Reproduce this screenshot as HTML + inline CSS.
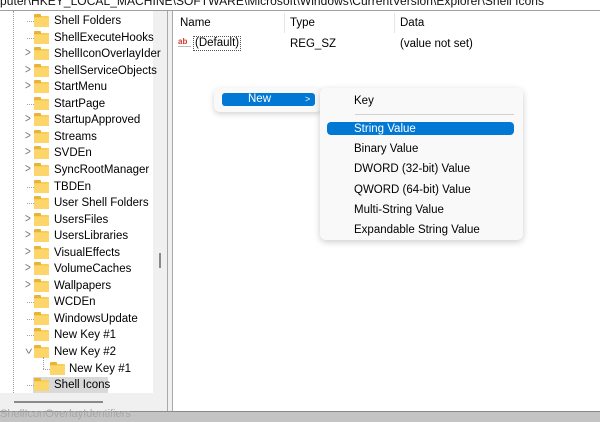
<!DOCTYPE html>
<html><head><meta charset="utf-8"><style>
*{margin:0;padding:0;box-sizing:border-box}
body{width:600px;height:422px;overflow:hidden;background:#fff;font-family:"Liberation Sans",sans-serif;font-size:11.5px;color:#000;position:relative}
.abs{position:absolute}
.row{position:absolute;height:16px;line-height:16px;white-space:nowrap}
.fold{position:absolute;width:15px;height:11px;background:#f8cf55;border-radius:1px}
.fold:before{content:"";position:absolute;left:0;top:-2px;width:7px;height:3px;background:#e9b33a;border-radius:1px 1px 0 0}
.fold:after{content:"";position:absolute;left:0;top:2px;width:15px;height:9px;background:#fcd66a}
.chev{position:absolute;font-size:10px;color:#777;line-height:16px}
.mi{position:absolute;left:354px;font-size:11.5px;line-height:14px}
</style></head><body>
<div class="abs" style="left:0;top:-6px;font-size:12px;color:#111;white-space:nowrap;letter-spacing:0.05px">puter\HKEY_LOCAL_MACHINE\SOFTWARE\Microsoft\Windows\CurrentVersion\Explorer\Shell Icons</div>
<div class="abs" style="left:0;top:10px;width:600px;height:1px;background:#a0a0a0"></div>
<div class="abs" style="left:153px;top:11px;width:14px;height:400px;background:#f0f0f0"></div>
<div class="abs" style="left:159px;top:253px;width:2px;height:15px;background:#8a8a8a"></div>
<div class="abs" style="left:0;top:393px;width:153px;height:18px;background:#f0f0f0"></div>
<div class="abs" style="left:14px;top:401px;width:89px;height:2px;background:#8a8a8a"></div>
<div class="abs" style="left:167px;top:11px;width:6px;height:400px;background:#f0f0f0;border-left:1px solid #a8a8a8;border-right:1px solid #a8a8a8"></div>
<div class="abs" style="left:13px;top:11px;width:0;height:382px;border-left:1px dotted #a0a0a0"></div>

<div class="abs" style="left:33px;top:377px;width:75px;height:16px;background:#d9d9d9"></div>
<div id="tree"></div>
<script>
var items=[["Shell Folders",0],["ShellExecuteHooks",0],["ShellIconOverlayIder",1],["ShellServiceObjects",1],["StartMenu",1],["StartPage",0],["StartupApproved",1],["Streams",1],["SVDEn",1],["SyncRootManager",1],["TBDEn",0],["User Shell Folders",0],["UsersFiles",1],["UsersLibraries",1],["VisualEffects",1],["VolumeCaches",1],["Wallpapers",1],["WCDEn",0],["WindowsUpdate",0],["New Key #1",0],["New Key #2",2],["New Key #1",3],["Shell Icons",0]];
var h="";
for(var i=0;i<items.length;i++){
 var y=13+i*16.55, it=items[i], sub=it[1]==3;
 var fx=sub?50:34, tx=sub?69:54;
 if(it[1]==1) h+='<div class="chev" style="left:25px;top:'+y+'px"><span style="display:inline-block;transform:scaleY(1.3);font-size:10px">&gt;</span></div>';
 else if(it[1]==2) h+='<div class="chev" style="left:24px;top:'+(y-1)+'px"><span style="display:inline-block;transform:rotate(90deg) scaleY(1.3);font-size:10px">&gt;</span></div>';
 else if(!sub) h+='<div class="abs" style="left:27px;top:'+(y+8)+'px;width:7px;border-top:1px dotted #a0a0a0"></div>';
 else h+='<div class="abs" style="left:43px;top:'+(y-4)+'px;height:12px;border-left:1px dotted #a0a0a0"></div><div class="abs" style="left:43px;top:'+(y+8)+'px;width:7px;border-top:1px dotted #a0a0a0"></div>';
 h+='<div class="fold" style="left:'+fx+'px;top:'+(y+3)+'px"></div>';
 h+='<div class="row" style="left:'+tx+'px;top:'+y+'px">'+it[0].replace('#','&#35;')+'</div>';
}
document.getElementById('tree').innerHTML=h;
</script>
<div class="row" style="left:180px;top:15px">Name</div>
<div class="row" style="left:290px;top:15px">Type</div>
<div class="row" style="left:400px;top:15px">Data</div>
<div class="abs" style="left:284px;top:13px;width:1px;height:20px;background:#e5e5e5"></div>
<div class="abs" style="left:394px;top:13px;width:1px;height:20px;background:#e5e5e5"></div>
<div class="abs" style="left:178px;top:37px;width:13px;height:9px;font-size:8px;font-weight:bold;color:#d23a2a;line-height:9px">ab</div>
<div class="abs" style="left:178px;top:46px;width:13px;height:3px;border-top:1px solid #bbb"></div>
<div class="row" style="left:193px;top:36px;border:1px dotted #555;height:15px;line-height:13px;padding:0 1px">(Default)</div>
<div class="row" style="left:290px;top:36px">REG_SZ</div>
<div class="row" style="left:400px;top:36px">(value not set)</div>
<div class="abs" style="left:0;top:411px;width:600px;height:11px;background:#c4c4c4;border-top:1px solid #8a8a8a"></div>
<div class="abs" style="left:0;top:408px;font-size:11px;color:#a8a8a8;white-space:nowrap">ShellIconOverlayIdentifiers</div>
<div class="abs" style="left:214px;top:88px;width:108px;height:24px;background:#f9f9f9;border-radius:6px;box-shadow:0 2px 6px rgba(0,0,0,.18)"></div>
<div class="abs" style="left:222px;top:93px;width:93px;height:13px;background:#0078d4;border-radius:3px"></div>
<div class="abs" style="left:248px;top:92px;color:#fff;font-size:11.5px;line-height:15px">New</div>
<div class="abs" style="left:305px;top:92px;color:#fff;font-size:9px;line-height:15px">&gt;</div>
<div class="abs" style="left:320px;top:88px;width:203px;height:152px;background:#f9f9f9;border-radius:6px;box-shadow:0 2px 7px rgba(0,0,0,.2)"></div>
<div class="mi" style="top:94px">Key</div>
<div class="abs" style="left:355px;top:114px;width:159px;height:1px;background:#d0d0d0"></div>
<div class="abs" style="left:327px;top:122px;width:187px;height:13px;background:#0078d4;border-radius:4px"></div>
<div class="mi" style="top:122px;color:#fff">String Value</div>
<div class="mi" style="top:142px">Binary Value</div>
<div class="mi" style="top:162px">DWORD (32-bit) Value</div>
<div class="mi" style="top:183px">QWORD (64-bit) Value</div>
<div class="mi" style="top:203px">Multi-String Value</div>
<div class="mi" style="top:223px">Expandable String Value</div>
</body></html>
